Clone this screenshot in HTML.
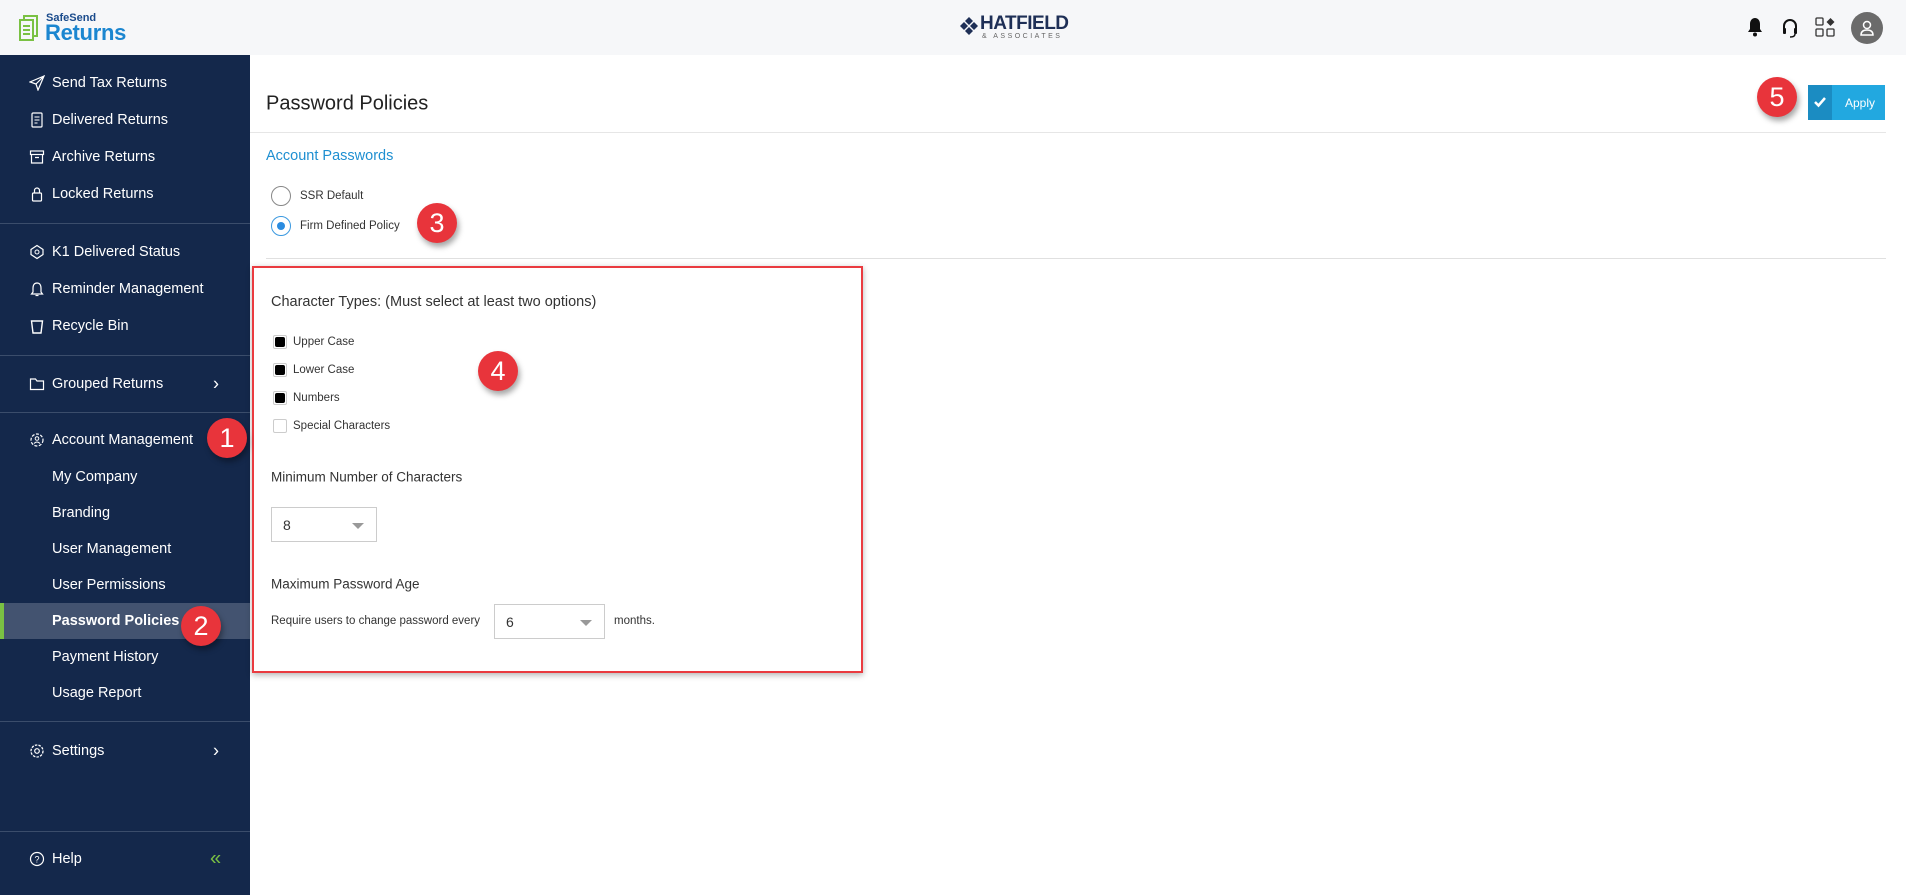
<!DOCTYPE html>
<html><head><meta charset="utf-8"><style>
*{box-sizing:border-box;margin:0;padding:0}
body{width:1906px;height:895px;overflow:hidden;font-family:"Liberation Sans",sans-serif;background:#fff;position:relative}
.abs{position:absolute}
#hdr{left:0;top:0;width:1906px;height:55px;background:#f6f7f9}
#side{left:0;top:55px;width:250px;height:840px;background:#14284b}
.it{position:absolute;left:52px;color:#fff;font-size:14.5px;transform:translateY(-50%);white-space:nowrap}
.ic{position:absolute;left:29px;transform:translateY(-50%);width:16px;height:16px}
.dv{position:absolute;left:0;width:250px;height:1px;background:#3b4d6b}
.badge{position:absolute;width:40px;height:40px;border-radius:50%;background:#e8343b;color:#fff;font-size:27px;text-align:center;line-height:40px;box-shadow:2px 4px 6px rgba(0,0,0,.35);transform:translate(-50%,-50%)}
.t{position:absolute;color:#333;white-space:nowrap;transform:translateY(-50%)}
.cb{position:absolute;left:273px;width:14px;height:14px;border:1px solid #ccc;border-radius:2px;transform:translateY(-50%);background:#fff}
.cb.on::after{content:"";position:absolute;left:1px;top:1px;width:10px;height:10px;background:#000;border-radius:2px}
.sel{position:absolute;border:1px solid #ccc;background:#fff}
.sel span{position:absolute;left:11px;top:50%;transform:translateY(-50%);font-size:14px;color:#333}
.sel i{position:absolute;right:12px;top:50%;margin-top:-2px;border-left:6px solid transparent;border-right:6px solid transparent;border-top:6px solid #999}
</style></head><body>
<div id="hdr" class="abs"></div>
<svg class="abs" style="left:19px;top:15px" width="20" height="26" viewBox="0 0 20 26"><rect x="5" y="1" width="13" height="20" fill="none" stroke="#7ac143" stroke-width="2"/><rect x="1" y="5" width="13" height="20" fill="#f6f7f9" stroke="#7ac143" stroke-width="2"/><path d="M4 11h7M4 15h7M4 19h7" stroke="#7ac143" stroke-width="2"/></svg>
<div class="abs" style="left:46px;top:12px;font-size:11px;font-weight:bold;color:#1a4b8c">SafeSend</div>
<div class="abs" style="left:45px;top:20px;font-size:22px;font-weight:bold;color:#1b86d0;letter-spacing:-.3px">Returns</div>
<svg class="abs" style="left:960px;top:16px" width="18" height="22" viewBox="0 0 18 22"><path d="M9 1l4 4-4 4-4-4zM4 6l4 4-4 4-4-4zM14 6l4 4-4 4-4-4zM9 11l4 4-4 4-4-4z" fill="#1e2f56"/></svg>
<div class="abs" style="left:980px;top:13px;font-size:19px;font-weight:bold;color:#1e2f56;letter-spacing:-.5px">HATFIELD</div>
<div class="abs" style="left:982px;top:33px;font-size:7px;color:#666;letter-spacing:2.5px">&amp; ASSOCIATES</div>
<svg class="abs" style="left:1747px;top:17px" width="16" height="20" viewBox="0 0 16 20"><path d="M8 1c-3 0-5 2.5-5 6v5l-2 3h14l-2-3V7c0-3.5-2-6-5-6z" fill="#111"/><circle cx="8" cy="17.5" r="2" fill="#111"/></svg>
<svg class="abs" style="left:1781px;top:17px" width="18" height="22" viewBox="0 0 18 22"><path d="M3 12V9a6 6 0 0112 0v3" fill="none" stroke="#111" stroke-width="2"/><rect x="2" y="11" width="3" height="6" rx="1" fill="#111"/><rect x="13" y="11" width="3" height="6" rx="1" fill="#111"/><path d="M14 17q0 3-5 3" fill="none" stroke="#111" stroke-width="1.5"/></svg>
<svg class="abs" style="left:1815px;top:17px" width="20" height="20" viewBox="0 0 20 20"><rect x="1" y="1" width="7" height="7" rx="1" fill="none" stroke="#333" stroke-width="1.3"/><rect x="1" y="12" width="7" height="7" rx="1" fill="none" stroke="#333" stroke-width="1.3"/><rect x="12" y="12" width="7" height="7" rx="1" fill="none" stroke="#333" stroke-width="1.3"/><path d="M15.5 1l4 4-4 4-4-4z" fill="#333"/></svg>
<div class="abs" style="left:1851px;top:12px;width:32px;height:32px;border-radius:50%;background:#6b6b6b"></div>
<svg class="abs" style="left:1859px;top:19px" width="16" height="18" viewBox="0 0 16 18"><circle cx="8" cy="6" r="3.5" fill="none" stroke="#fff" stroke-width="1.5"/><path d="M2 16q0-5 6-5t6 5z" fill="none" stroke="#fff" stroke-width="1.5"/></svg>

<div id="side" class="abs"></div>
<div class="abs" style="left:0;top:603px;width:250px;height:36px;background:#435370"></div>
<div class="abs" style="left:0;top:603px;width:4px;height:36px;background:#7ac143"></div>
<svg class="ic" style="top:83px" viewBox="0 0 16 16"><path d="M15 1L1 7l6 2 2 6z M15 1L7 9" fill="none" stroke="#fff" stroke-width="1.2"/></svg>
<svg class="ic" style="top:120px" viewBox="0 0 16 16"><rect x="3" y="1" width="10" height="14" rx="1" fill="none" stroke="#fff" stroke-width="1.2"/><path d="M5.5 5h5M5.5 8h5M5.5 11h3" stroke="#fff"/></svg>
<svg class="ic" style="top:157px" viewBox="0 0 16 16"><rect x="1.5" y="2" width="13" height="3.5" fill="none" stroke="#fff" stroke-width="1.2"/><path d="M2.5 5.5V14h11V5.5M6 8.5h4" fill="none" stroke="#fff" stroke-width="1.2"/></svg>
<svg class="ic" style="top:194px" viewBox="0 0 16 16"><rect x="3.5" y="7" width="9" height="8" rx="1" fill="none" stroke="#fff" stroke-width="1.2"/><path d="M5.5 7V4.5a2.5 2.5 0 015 0V7" fill="none" stroke="#fff" stroke-width="1.2"/></svg>
<svg class="ic" style="top:252px" viewBox="0 0 16 16"><path d="M8 1.5l6 4v5l-6 4-6-4v-5z" fill="none" stroke="#fff" stroke-width="1.2"/><circle cx="8" cy="8" r="2" fill="none" stroke="#fff"/></svg>
<svg class="ic" style="top:289px" viewBox="0 0 16 16"><path d="M8 2c-3 0-4 2.5-4 5v4l-1.5 2h11L12 11V7c0-2.5-1-5-4-5z" fill="none" stroke="#fff" stroke-width="1.2"/><path d="M6.5 14.5h3" stroke="#fff" stroke-width="1.2"/></svg>
<svg class="ic" style="top:326px" viewBox="0 0 16 16"><path d="M2.5 3h11l-1.5 12h-8z" fill="none" stroke="#fff" stroke-width="1.4"/></svg>
<svg class="ic" style="top:384px" viewBox="0 0 16 16"><path d="M1.5 3h5l1.5 2h6.5v8.5h-13z" fill="none" stroke="#fff" stroke-width="1.2"/></svg>
<svg class="ic" style="top:440px" viewBox="0 0 16 16"><circle cx="8" cy="8" r="6" fill="none" stroke="#fff" stroke-width="1.2" stroke-dasharray="3 1.5"/><circle cx="8" cy="6.5" r="1.8" fill="none" stroke="#fff"/><path d="M5 11.5q3-3 6 0" fill="none" stroke="#fff"/></svg>
<svg class="ic" style="top:751px" viewBox="0 0 16 16"><circle cx="8" cy="8" r="6" fill="none" stroke="#fff" stroke-width="1.3" stroke-dasharray="2.5 1.2"/><circle cx="8" cy="8" r="2.3" fill="none" stroke="#fff" stroke-width="1.2"/></svg>
<svg class="ic" style="top:859px" viewBox="0 0 16 16"><circle cx="8" cy="8" r="6.5" fill="none" stroke="#fff" stroke-width="1.2"/><text x="8" y="11.5" font-size="9" fill="#fff" text-anchor="middle" font-family="Liberation Sans">?</text></svg>

<div class="it" style="top:83px">Send Tax Returns</div>
<div class="it" style="top:120px">Delivered Returns</div>
<div class="it" style="top:157px">Archive Returns</div>
<div class="it" style="top:194px">Locked Returns</div>
<div class="dv" style="top:223px"></div>
<div class="it" style="top:252px">K1 Delivered Status</div>
<div class="it" style="top:289px">Reminder Management</div>
<div class="it" style="top:326px">Recycle Bin</div>
<div class="dv" style="top:355px"></div>
<div class="it" style="top:384px">Grouped Returns</div>
<div class="it" style="top:384px;left:213px;font-size:18px">&#x203A;</div>
<div class="dv" style="top:412px"></div>
<div class="it" style="top:440px">Account Management</div>
<div class="it" style="top:477px">My Company</div>
<div class="it" style="top:513px">Branding</div>
<div class="it" style="top:549px">User Management</div>
<div class="it" style="top:585px">User Permissions</div>
<div class="it" style="top:621px;font-weight:bold">Password Policies</div>
<div class="it" style="top:657px">Payment History</div>
<div class="it" style="top:693px">Usage Report</div>
<div class="dv" style="top:721px"></div>
<div class="it" style="top:751px">Settings</div>
<div class="it" style="top:751px;left:213px;font-size:18px">&#x203A;</div>
<div class="dv" style="top:831px"></div>
<div class="it" style="top:859px">Help</div>
<div class="it" style="top:859px;left:210px;color:#7ac143;font-size:20px">&#xAB;</div>

<div class="t" style="left:266px;top:104px;font-size:20px;color:#222">Password Policies</div>
<div class="abs" style="left:1808px;top:85px;width:77px;height:35px;background:#22a8e0"></div>
<div class="abs" style="left:1808px;top:85px;width:24px;height:35px;background:#1b8cc2"></div>
<svg class="abs" style="left:1813px;top:96px" width="14" height="12" viewBox="0 0 14 12"><path d="M2 6l3.5 3.5L12 2" fill="none" stroke="#fff" stroke-width="2.5"/></svg>
<div class="t" style="left:1845px;top:103px;font-size:12px;color:#fff">Apply</div>
<div class="abs" style="left:250px;top:132px;width:1636px;height:1px;background:#e6e6e6"></div>
<div class="t" style="left:266px;top:156px;font-size:14.5px;color:#1e8fd1">Account Passwords</div>
<div class="abs" style="left:271px;top:186px;width:20px;height:20px;border-radius:50%;border:1px solid #888"></div>
<div class="abs" style="left:271px;top:216px;width:20px;height:20px;border-radius:50%;border:1px solid #3b99e0"></div>
<div class="abs" style="left:277px;top:222px;width:8px;height:8px;border-radius:50%;background:#2b8ce0"></div>
<div class="t" style="left:300px;top:196px;font-size:11.5px">SSR Default</div>
<div class="t" style="left:300px;top:226px;font-size:11.5px">Firm Defined Policy</div>
<div class="abs" style="left:266px;top:258px;width:1620px;height:1px;background:#e0e0e0"></div>

<div class="abs" style="left:252px;top:266px;width:611px;height:407px;border:2.5px solid #ea3b40;box-shadow:0 2px 6px rgba(0,0,0,.3)"></div>
<div class="t" style="left:271px;top:302px;font-size:14.5px">Character Types: (Must select at least two options)</div>
<div class="cb on" style="top:342px"></div><div class="t" style="left:293px;top:342px;font-size:11.5px">Upper Case</div>
<div class="cb on" style="top:370px"></div><div class="t" style="left:293px;top:370px;font-size:11.5px">Lower Case</div>
<div class="cb on" style="top:398px"></div><div class="t" style="left:293px;top:398px;font-size:11.5px">Numbers</div>
<div class="cb" style="top:426px"></div><div class="t" style="left:293px;top:426px;font-size:11.5px">Special Characters</div>
<div class="t" style="left:271px;top:477px;font-size:13.5px">Minimum Number of Characters</div>
<div class="sel" style="left:271px;top:507px;width:106px;height:35px"><span>8</span><i></i></div>
<div class="t" style="left:271px;top:584px;font-size:13.5px">Maximum Password Age</div>
<div class="t" style="left:271px;top:621px;font-size:11.5px">Require users to change password every</div>
<div class="sel" style="left:494px;top:604px;width:111px;height:35px"><span>6</span><i></i></div>
<div class="t" style="left:614px;top:621px;font-size:11.5px">months.</div>

<div class="badge" style="left:227px;top:438px">1</div>
<div class="badge" style="left:201px;top:626px">2</div>
<div class="badge" style="left:437px;top:223px">3</div>
<div class="badge" style="left:498px;top:371px">4</div>
<div class="badge" style="left:1777px;top:97px">5</div>
</body></html>
